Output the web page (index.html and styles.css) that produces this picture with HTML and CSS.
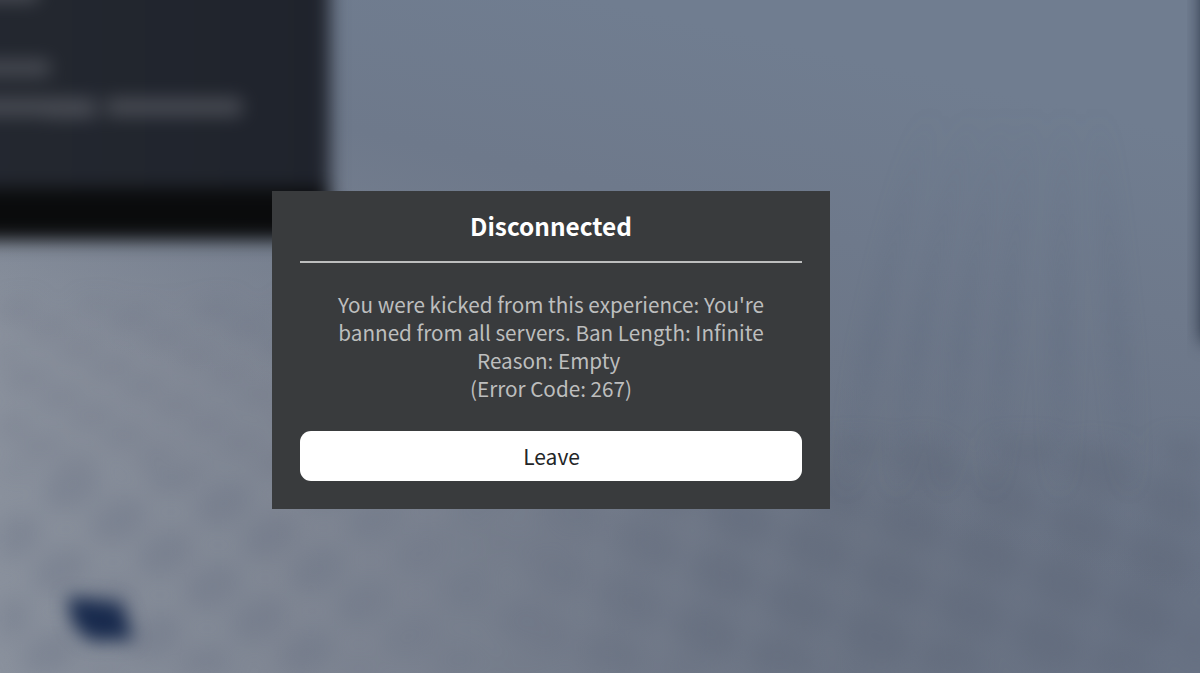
FILE: index.html
```
<!DOCTYPE html>
<html lang="en">
  <head>
    <meta charset="UTF-8">
    <meta name="viewport" content="width=device-width, initial-scale=1.0">
    <title>Disconnected</title>
    <link rel="stylesheet" href="styles.css">
  </head>
  <body>
    <svg class="scene" viewBox="0 0 1200 673" preserveAspectRatio="none" aria-hidden="true" color-interpolation-filters="sRGB">
      <defs>
        <linearGradient id="ground" x1="0" y1="0" x2="1" y2="0">
          <stop offset="0" stop-color="#8a919d"/>
          <stop offset=".25" stop-color="#7f8693"/>
          <stop offset=".5" stop-color="#737b8a"/>
          <stop offset=".72" stop-color="#6a7383"/>
          <stop offset="1" stop-color="#687284"/>
        </linearGradient>
        <linearGradient id="sky" gradientUnits="userSpaceOnUse" x1="600" y1="0" x2="500" y2="440">
          <stop offset="0" stop-color="#707d90"/>
          <stop offset=".4" stop-color="#6e798b"/>
          <stop offset="1" stop-color="#6e798b" stop-opacity="0"/>
        </linearGradient>
        <linearGradient id="screen" x1="0" y1="0" x2="1" y2="0">
          <stop offset="0" stop-color="#242830"/>
          <stop offset="1" stop-color="#1f232c"/>
        </linearGradient>
        <linearGradient id="fadeLeft" x1="0" y1="0" x2="1" y2="0">
          <stop offset=".25" stop-color="#fff"/>
          <stop offset=".5" stop-color="#000"/>
        </linearGradient>
        <linearGradient id="fadeRight" x1="0" y1="0" x2="1" y2="0">
          <stop offset=".35" stop-color="#000"/>
          <stop offset=".6" stop-color="#fff"/>
        </linearGradient>
        <linearGradient id="streak" gradientUnits="userSpaceOnUse" x1="0" y1="110" x2="0" y2="500">
          <stop offset="0" stop-color="#57647a" stop-opacity="0"/>
          <stop offset=".6" stop-color="#57647a" stop-opacity=".22"/>
          <stop offset="1" stop-color="#57647a" stop-opacity="0"/>
        </linearGradient>
        <pattern id="tilesLeft" width="1" height="1" patternUnits="userSpaceOnUse" patternTransform="matrix(47 33 -58 50 218 545)">
          <circle cx=".5" cy=".5" r=".38" fill="#5d6578"/>
        </pattern>
        <pattern id="tilesFar" width="1" height="1" patternUnits="userSpaceOnUse" patternTransform="matrix(32 19 -52 30 218 400)">
          <circle cx=".5" cy=".5" r=".38" fill="#5d6578"/>
        </pattern>
        <pattern id="tilesRight" width="1" height="1" patternUnits="userSpaceOnUse" patternTransform="matrix(77 31 -17 57 1018 598)">
          <circle cx=".5" cy=".5" r=".42" fill="#5a6375"/>
        </pattern>
        <mask id="maskLeft"><rect width="1200" height="673" fill="url(#fadeLeft)"/></mask>
        <mask id="maskRight"><rect width="1200" height="673" fill="url(#fadeRight)"/></mask>
        <filter id="blur" x="-20%" y="-20%" width="140%" height="140%"><feGaussianBlur stdDeviation="11"/></filter>
        <filter id="blurSmall" x="-50%" y="-50%" width="200%" height="200%"><feGaussianBlur stdDeviation="9"/></filter>
      </defs>

      <rect width="1200" height="673" fill="url(#ground)"/>
      <rect width="1200" height="673" fill="url(#sky)"/>

      <!-- floor tiles -->
      <g filter="url(#blur)">
        <g mask="url(#maskLeft)">
          <rect y="470" width="700" height="240" fill="url(#tilesLeft)" opacity=".24"/>
          <rect y="300" width="700" height="170" fill="url(#tilesFar)" opacity=".2"/>
        </g>
        <g mask="url(#maskRight)"><rect x="400" y="440" width="800" height="260" fill="url(#tilesRight)" opacity=".34"/></g>
      </g>
      <g filter="url(#blurSmall)" fill="none" stroke="url(#streak)" stroke-width="20">
        <path d="M940 90Q890 220 845 500"/>
        <path d="M980 90Q925 260 895 500"/>
        <path d="M1010 90Q965 270 942 500"/>
        <path d="M1035 90Q1007 270 992 500"/>
        <path d="M1065 90Q1060 270 1060 500"/>
        <path d="M1095 90Q1115 270 1130 500"/>
      </g>

      <!-- left board -->
      <g filter="url(#blurSmall)">
        <rect x="-40" y="-40" width="370" height="280" fill="#0a0b0c"/>
        <rect x="-40" y="-40" width="370" height="228" fill="url(#screen)"/>
      </g>
      <g filter="url(#blurSmall)" fill="#565961" opacity=".75">
        <rect x="-30" y="-18" width="68" height="20"/>
        <rect x="-30" y="60" width="80" height="16"/>
        <rect x="-30" y="98" width="121" height="18"/>
        <rect x="46" y="98" width="50" height="20"/>
        <rect x="106" y="98" width="136" height="18"/>
      </g>

      <!-- right board edge and the blue block -->
      <rect x="1202" y="-40" width="30" height="382" fill="#1d2738" filter="url(#blurSmall)"/>
      <path d="M67 596L122 603L134 640L90 641L73 625Z" fill="#182a4d" filter="url(#blurSmall)"/>
    </svg>

    <div class="prompt">
      <h1 class="title">Disconnected</h1>
      <p class="message">You were kicked from this experience: You're<br>banned from all servers. Ban Length: Infinite<br>Reason: Empty&nbsp;<br>(Error Code: 267)</p>
      <button class="leave">Leave</button>
    </div>
  </body>
</html>
```
FILE: styles.css
```
*{
    margin: 0;
    padding: 0;
    box-sizing: border-box;
    font-family: "Noto Sans CJK JP", "Noto Sans", sans-serif;
}

body{
    height: 100vh;
    overflow: hidden;
    background: #727b8b;
    display: grid;
}

/* scene and prompt share the same cell */
.scene, .prompt{
    grid-area: 1 / 1;
}

.scene{
    width: 100%;
    height: 100vh;
}

.prompt{
    z-index: 1;
    width: 558px;
    height: 318px;
    margin: 191px 0 0 272px;
    padding: 0 28px 28px;
    background: #393b3d;
    text-align: center;
    display: flex;
    flex-direction: column;
}

.title{
    height: 72px;
    border-bottom: 2px solid #bdbebe;
    color: #fff;
    font-size: 24.4px;
    font-weight: 700;
    line-height: 70px;
}

.message{
    margin-top: 27px;
    color: #bdbebe;
    font-size: 20.7px;
    line-height: 28px;
    white-space: nowrap;
}

.leave{
    height: 50px;
    margin-top: auto;
    padding-left: 1px;
    border: 0;
    border-radius: 11px;
    background: #fff;
    color: #232527;
    font-size: 21px;
    line-height: 50px;
    cursor: pointer;
}
```
